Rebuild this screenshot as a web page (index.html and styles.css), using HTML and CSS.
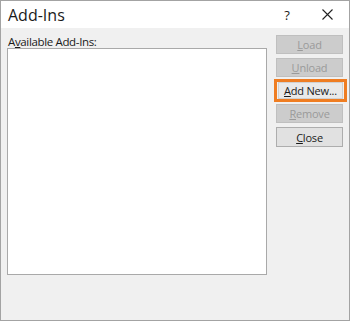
FILE: index.html
```html
<!DOCTYPE html>
<html lang="en">
<head>
  <meta charset="UTF-8">
  <title>Add-Ins</title>
  <link rel="stylesheet" href="styles.css">
</head>
<body>
  <div class="dialog">
    <div class="titlebar">
      <div class="title">Add-Ins</div>
      <div class="title-help">?</div>
      <div class="title-close">
        <svg width="11" height="11" viewBox="0 0 11 11">
          <path d="M0.5 0.5 L10.5 10.5 M10.5 0.5 L0.5 10.5" stroke="#222" stroke-width="1.1" fill="none"/>
        </svg>
      </div>
    </div>

    <div class="content">
      <div class="list-col">
        <div class="label">A<u>v</u>ailable Add-Ins:</div>
        <div class="listbox"></div>
      </div>

      <div class="buttons">
        <button class="btn" disabled><u>L</u>oad</button>
        <button class="btn" disabled><u>U</u>nload</button>
        <div class="highlight">
          <button class="btn btn-active"><u>A</u>dd New...</button>
        </div>
        <button class="btn" disabled><u>R</u>emove</button>
        <button class="btn btn-close"><u>C</u>lose</button>
      </div>
    </div>
  </div>
</body>
</html>
```

FILE: styles.css
```css
* {
  margin: 0;
  padding: 0;
  box-sizing: border-box;
}

body {
  width: 350px;
  height: 321px;
  font-family: "Open Sans", "Noto Sans", sans-serif;
  background: #f0f0f0;
  color: #1a1a1a;
}

.dialog {
  width: 350px;
  height: 321px;
  border: 1px solid #a3a3a3;
  background: #f0f0f0;
  display: flex;
  flex-direction: column;
}

.titlebar {
  height: 27px;
  background: #fff;
  display: flex;
  align-items: center;
}

.title {
  flex: 1;
  padding-left: 7px;
  font-size: 16px;
  color: #1a1a1a;
}

.title-help {
  width: 20px;
  font-size: 13px;
  margin-right: 25px;
  text-align: center;
}

.title-close {
  width: 14px;
  margin-right: 13px;
  display: flex;
  align-items: center;
}

.content {
  flex: 1;
  display: flex;
  padding: 7px 6px 0 6px;
}

.list-col {
  width: 260px;
  display: flex;
  flex-direction: column;
}

.label {
  font-size: 11.5px;
  letter-spacing: -0.35px;
  line-height: 13px;
  padding-left: 1px;
  color: #1a1a1a;
}

.listbox {
  width: 260px;
  height: 227px;
  background: #fff;
  border: 1px solid #a9a9a9;
}

.buttons {
  margin-left: 9px;
  width: 67px;
  display: flex;
  flex-direction: column;
  gap: 4px;
}

.btn {
  width: 67px;
  height: 19px;
  font-family: inherit;
  font-size: 11px;
  letter-spacing: -0.2px;
  background: #e1e1e1;
  border: 1px solid #adadad;
  color: #1a1a1a;
}

.btn[disabled] {
  background: #cccccc;
  border-color: #bfbfbf;
  color: #9a9a9a;
}

.highlight {
  margin: -2px -4px -2px -2px;
  border: 3px solid #ef7d22;
  width: 73px;
  display: flex;
  justify-content: center;
}

.btn-active {
  width: 65px;
  height: 17px;
  background: #e9e9e9;
  border-color: #d0d0d0;
}

.btn-close {
  height: 20px;
}
```
